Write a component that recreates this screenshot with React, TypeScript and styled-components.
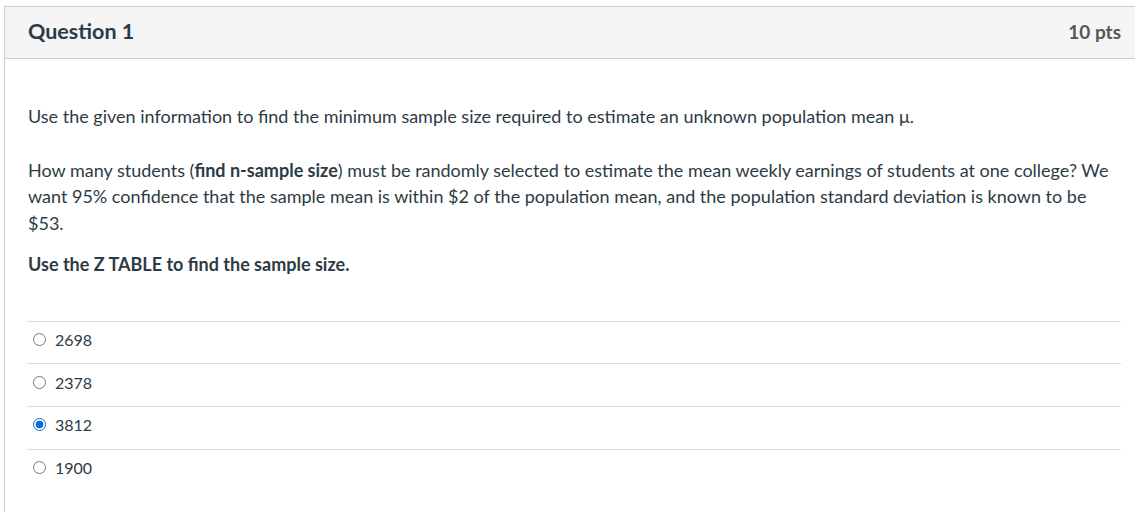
import { createGlobalStyle } from 'styled-components';
import styled from 'styled-components';

const GlobalStyle = createGlobalStyle`
	html, body {
		margin: 0;
		padding: 0;
		background: #fff;
		overflow: hidden;
	}
	body {
		font-family: Lato, "Open Sans", "Liberation Sans", sans-serif;
		color: #2d3b45;
	}
`;

const Card = styled.div`
	box-sizing: border-box;
	width: 1133px;
	margin: 6px 0 0 4px;
	border: 1px solid #c7cdd1;
	border-bottom: none;
	min-height: 520px;
`;

const Header = styled.div`
	display: flex;
	align-items: center;
	justify-content: space-between;
	height: 51px;
	padding: 0 15px 0 23px;
	background: #f5f5f5;
	border-bottom: 1px solid #c7cdd1;
`;

const Title = styled.h2`
	margin: 0;
	font-size: 21.5px;
	font-weight: 700;
	color: #2d3b45;
	position: relative;
	top: -2px;
`;

const Points = styled.span`
	font-size: 19px;
	font-weight: 700;
	color: #565656;
	position: relative;
	top: -1px;
`;

const Body = styled.div`
	padding: 44px 15px 0 23px;
`;

const Para = styled.p<{ $after?: number }>`
	margin: 0 0 ${(p) => p.$after ?? 14}px;
	font-size: 18px;
	line-height: 26.7px;
`;

const Answers = styled.div`
	margin: 43px 0 0 -1px;
	border-top: 1px solid #dcdfe1;
`;

const Answer = styled.label<{ $last?: boolean }>`
	box-sizing: border-box;
	display: flex;
	align-items: center;
	gap: 9px;
	height: 42.7px;
	padding: 0 0 6px 6px;
	border-bottom: ${(p) => (p.$last ? 'none' : '1px solid #dcdfe1')};
	font-size: 16px;
	color: #2d3b45;
`;

const Radio = styled.span<{ $checked?: boolean }>`
	box-sizing: border-box;
	display: inline-block;
	width: 13px;
	height: 13px;
	border-radius: 50%;
	border: 1px solid ${(p) => (p.$checked ? '#0b6dd6' : '#767676')};
	background: ${(p) => (p.$checked ? 'radial-gradient(circle, #0b6dd6 0 3.6px, #fff 4.2px)' : '#fff')};
	${(p) => (p.$checked ? 'border-width: 1.5px;' : '')}
`;

const options = ['2698', '2378', '3812', '1900'];
const selected = '3812';

export default function App() {
	return (
		<>
			<GlobalStyle />
			<Card>
				<Header>
					<Title>Question 1</Title>
					<Points>10 pts</Points>
				</Header>
				<Body>
					<Para $after={27}>
						Use the given information to find the minimum sample size required to estimate an unknown population mean μ.
					</Para>
					<Para>
						How many students (<b>find n-sample size</b>) must be randomly selected to estimate the mean weekly earnings of students at one college? We want 95% confidence that the sample mean is within $2 of the population mean, and the population standard deviation is known to be $53.
					</Para>
					<Para>
						<b>Use the Z TABLE to find the sample size.</b>
					</Para>
					<Answers>
						{options.map((o, i) => (
							<Answer key={o} $last={i === options.length - 1}>
								<Radio $checked={o === selected} />
								{o}
							</Answer>
						))}
					</Answers>
				</Body>
			</Card>
		</>
	);
}
